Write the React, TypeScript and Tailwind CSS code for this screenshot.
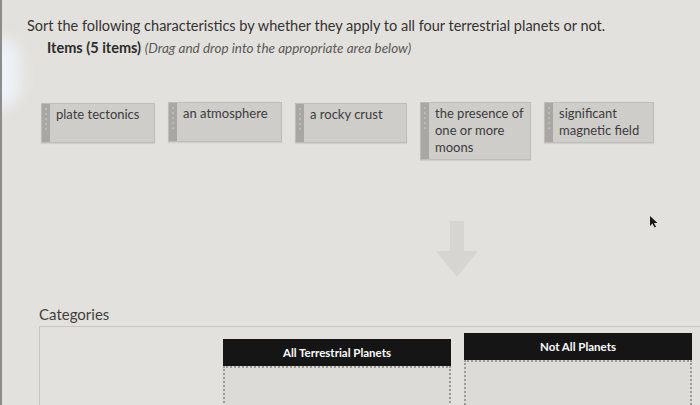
import React from 'react';

const items: { label: string; w: string; mt: string }[] = [
  { label: 'plate tectonics', w: 'w-[114px]', mt: 'mt-[1px]' },
  { label: 'an atmosphere', w: 'w-[114px]', mt: 'mt-0' },
  { label: 'a rocky crust', w: 'w-[112px]', mt: 'mt-[1px]' },
  { label: 'the presence of one or more moons', w: 'w-[111px]', mt: 'mt-0' },
  { label: 'significant magnetic field', w: 'w-[110px]', mt: 'mt-0' },
];

const ItemCard: React.FC<{ label: string; w: string; mt: string }> = ({ label, w, mt }) => (
  <div className={`${w} ${mt} min-h-[40px] flex bg-[#cfcdca] border border-[#bfbdba] shadow-[0_1px_1px_rgba(0,0,0,0.08)]`}>
    {/* grip strip */}
    <div className="w-[8px] shrink-0 bg-[#a9a7a4] flex flex-col items-center gap-[3px] pt-[4px]">
      {[0, 1, 2, 3, 4].map(i => (
        <span key={i} className="w-[2px] h-[2px] rounded-full bg-[#c4c2bf]" />
      ))}
    </div>
    <div className="pl-[6px] pr-[3px] pt-[2px] pb-[3px] text-[13px] leading-[17px] text-[#3c3c3c]">{label}</div>
  </div>
);

export default function App() {
  return (
    <div
      className="relative w-[700px] h-[405px] overflow-hidden bg-[#e3e1dd] text-[#2f2f2f]"
      style={{ fontFamily: 'Lato, "Open Sans", sans-serif' }}
    >
      {/* glare on left edge */}
      <div className="absolute left-[-22px] top-[38px] w-[42px] h-[70px] rounded-full bg-[#eef2f8] blur-[8px]" />
      <div className="absolute left-0 top-0 w-[2px] h-full bg-[#8d8c8a]" />

      <div className="relative pl-[27px] pt-[16px]">
        <p className="text-[14.5px] leading-[20px] text-[#333]">
          Sort the following characteristics by whether they apply to all four terrestrial planets or not.
        </p>
        <p className="pl-[20px] mt-[2px] text-[14.5px] leading-[20px]">
          <span className="font-bold text-[#2c2c2c]">Items (5 items)</span>{' '}
          <span className="italic text-[13.5px] text-[#5a5a5a]">(Drag and drop into the appropriate area below)</span>
        </p>
      </div>

      <div className="relative flex items-start gap-[13px] pl-[41px] mt-[44px]">
        {items.map(it => (
          <ItemCard key={it.label} {...it} />
        ))}
      </div>

      {/* drop arrow */}
      <svg className="absolute left-[434px] top-[221px]" width="46" height="58" viewBox="0 0 46 58">
        <path d="M16 0 H30 V30 H44 L23 56 L2 30 H16 Z" fill="#d7d5d1" />
      </svg>

      {/* mouse cursor */}
      <svg className="absolute left-[650px] top-[216px]" width="8" height="12" viewBox="0 0 8 12">
        <path d="M0 0 L0 10 L2.5 7.5 L4.5 11.5 L6 10.8 L4 7 L7.5 7 Z" fill="#1a1a1a" />
      </svg>

      <div className="absolute left-[39px] top-[303px] right-0">
        <p className="text-[15px] leading-[22px] text-[#3f3f3f]">Categories</p>
        <div className="mt-[1px] border-t border-l border-[#c8c6c2] h-[100px] flex gap-[13px] pl-[183px] pt-[12px]">
          {['All Terrestrial Planets', 'Not All Planets'].map((t, i) => (
            <div key={t} className={`w-[228px] ${i === 1 ? '-mt-[6px]' : ''}`}>
              <div className="h-[27px] bg-[#151515] text-white flex items-center justify-center text-[11.5px] font-bold">
                {t}
              </div>
              <div className="h-[60px] border-t-2 border-x-2 border-dotted border-[#9d9b98] bg-[#dddbd7]" />
            </div>
          ))}
        </div>
      </div>
    </div>
  );
}
